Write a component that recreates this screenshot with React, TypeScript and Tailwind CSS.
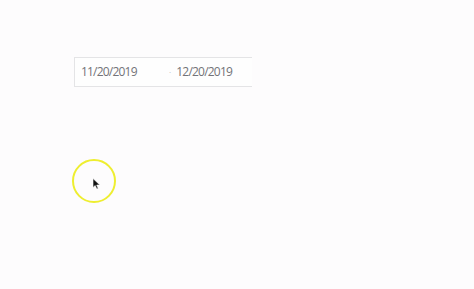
export default function App() {
  return (
    <div className="relative w-[474px] h-[289px] bg-[#fdfcfd] overflow-hidden" style={{ fontFamily: '"Open Sans", "Liberation Sans", sans-serif' }}>
      <div className="pt-[57px] pl-[74px]">
        <div className="flex items-center w-[178px] h-[30px] border border-r-0 border-[#e4e4e6] bg-[#fefefe] text-[12px] text-[#737378] tracking-[-0.8px]">
          <span className="pl-[6px] w-[94px]">11/20/2019</span>
          <span className="text-[#b0b0b0] text-[8px]">·</span>
          <span className="pl-[6px]">12/20/2019</span>
        </div>
      </div>
      <div className="absolute left-[72px] top-[159px] w-[44px] h-[44px] rounded-full border-[2px] border-[#eeee30]" />
      <svg className="absolute left-[92px] top-[178px]" width="9" height="12" viewBox="0 0 9 12">
        <path d="M1 0.5 L1 9.5 L3.2 7.5 L4.8 11 L6.2 10.4 L4.7 7 L7.8 7 Z" fill="#111" stroke="#fff" strokeWidth="0.6" />
      </svg>
    </div>
  );
}
